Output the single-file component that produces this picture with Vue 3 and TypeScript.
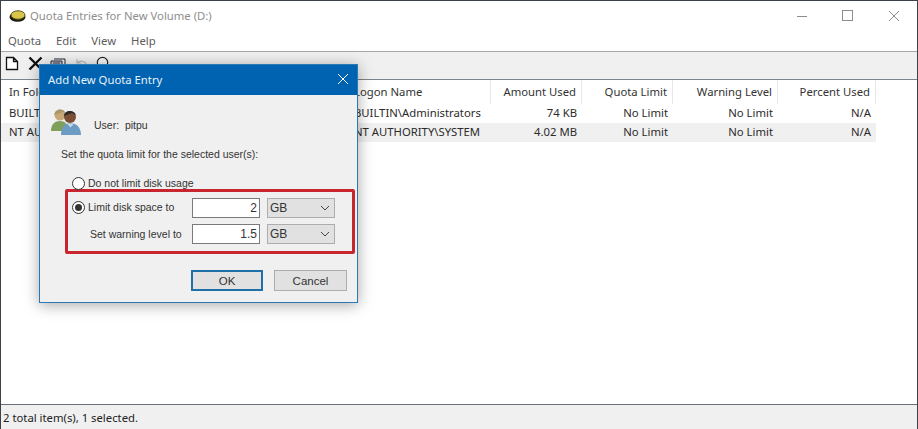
<script setup lang="ts">
interface QuotaRow {
  folder: string;
  logon: string;
  used: string;
  limit: string;
  warning: string;
  percent: string;
  selected?: boolean;
}

const menus = ['Quota', 'Edit', 'View', 'Help'];

const rows: QuotaRow[] = [
  { folder: 'BUILTIN', logon: 'BUILTIN\\Administrators', used: '74 KB', limit: 'No Limit', warning: 'No Limit', percent: 'N/A' },
  { folder: 'NT AUTHORITY', logon: 'NT AUTHORITY\\SYSTEM', used: '4.02 MB', limit: 'No Limit', warning: 'No Limit', percent: 'N/A', selected: true }
];
</script>

<template>
  <div class="window">
    <div class="titlebar">
      <svg class="app-icon" width="18" height="14" viewBox="0 0 18 14">
        <ellipse cx="8.500" cy="8" rx="8" ry="4.800" fill="#1c1a0c" />
        <ellipse cx="9" cy="6" rx="7" ry="4.200" fill="#d8c64a" stroke="#5f5a20" stroke-width="1" />
      </svg>
      <span class="title-text">Quota Entries for New Volume (D:)</span>
      <div class="caption-buttons">
        <svg width="12" height="12" viewBox="0 0 12 12"><path d="M1 6.500h10" stroke="#8c8c8c" fill="none" /></svg>
        <svg width="12" height="12" viewBox="0 0 12 12"><rect x="0.500" y="0.500" width="10" height="10" stroke="#8c8c8c" fill="none" /></svg>
        <svg width="12" height="12" viewBox="0 0 12 12"><path d="M1 1l10 10M11 1L1 11" stroke="#8c8c8c" fill="none" /></svg>
      </div>
    </div>

    <div class="menubar">
      <span v-for="menu in menus" :key="menu">{{ menu }}</span>
    </div>

    <div class="toolbar">
      <svg width="16" height="15" viewBox="0 0 16 15"><path d="M1.500 1.500h7l4 4v8h-11zM8.500 1.500v4h4" fill="#fff" stroke="#111" stroke-width="1.300" /></svg>
      <svg width="15" height="15" viewBox="0 0 15 15"><path d="M1.500 1.500l12 12M13.500 1.500l-12 12" stroke="#111" stroke-width="2.400" fill="none" /></svg>
      <svg width="17" height="15" viewBox="0 0 17 15"><path d="M1 5h11v9H1z" fill="#c9ccd6" stroke="#223" /><path d="M4 3h11v8" fill="none" stroke="#223" /><path d="M3 7h7M3 9h7M3 11h7" stroke="#334" /></svg>
      <svg width="15" height="15" viewBox="0 0 15 15"><path d="M3 7a5 4 0 0 1 9 1M3 3v4h4" fill="none" stroke="#b9b9b9" stroke-width="1.200" /></svg>
      <svg width="14" height="15" viewBox="0 0 14 15"><circle cx="6.500" cy="6.500" r="5.200" fill="#f5f7f7" stroke="#222" stroke-width="1.200" /></svg>
    </div>

    <div class="list">
      <div class="list-row list-head">
        <div class="cell">In Folder</div>
        <div class="cell"></div>
        <div class="cell logon">Logon Name</div>
        <div class="cell num">Amount Used</div>
        <div class="cell num">Quota Limit</div>
        <div class="cell num">Warning Level</div>
        <div class="cell num">Percent Used</div>
      </div>
      <div v-for="row in rows" :key="row.logon" class="list-row" :class="{ selected: row.selected }">
        <div class="cell">{{ row.folder }}</div>
        <div class="cell"></div>
        <div class="cell logon">{{ row.logon }}</div>
        <div class="cell num">{{ row.used }}</div>
        <div class="cell num">{{ row.limit }}</div>
        <div class="cell num">{{ row.warning }}</div>
        <div class="cell num">{{ row.percent }}</div>
      </div>
    </div>

    <div class="statusbar">2 total item(s), 1 selected.</div>

    <div class="dialog">
      <div class="dialog-title">
        <span>Add New Quota Entry</span>
        <svg width="12" height="12" viewBox="0 0 12 12"><path d="M1 1l10 10M11 1L1 11" stroke="#fff" stroke-width="1" fill="none" /></svg>
      </div>
      <div class="dialog-body">
        <div class="user-line">
          <svg width="32" height="30" viewBox="0 2 32 30">
            <circle cx="10" cy="9" r="5.500" fill="#c9a878" />
            <path d="M4.500 9c-.5-6 9-8 11-2l-3-1.500-2 1.500z" fill="#a8986a" />
            <path d="M1 25c0-7 4-10 9-10s8 3 8 10z" fill="#7ea05a" />
            <circle cx="20" cy="11" r="6" fill="#7a4f36" />
            <path d="M14 10c0-6 10-7 12-1l-4-2z" fill="#2f2a28" />
            <path d="M11 29c0-8 4-12 9.500-12S31 21 31 29z" fill="#6c9cc4" />
            <path d="M17 17.500l3.500 4 3.500-4z" fill="#c5d9e8" />
          </svg>
          <span class="user-text">User:&nbsp;&nbsp;pitpu</span>
        </div>
        <p class="prompt">Set the quota limit for the selected user(s):</p>
        <label class="radio-line">
          <span class="radio"></span>
          <span>Do not limit disk usage</span>
        </label>
        <div class="limits">
          <div class="limit-row">
            <label class="radio-line tight">
              <span class="radio on"></span>
              <span>Limit disk space to</span>
            </label>
            <div class="field">2</div>
            <div class="combo">
              <span>GB</span>
              <svg width="10" height="6" viewBox="0 0 10 6"><path d="M1 1l4 4 4-4" fill="none" stroke="#444" /></svg>
            </div>
          </div>
          <div class="limit-row">
            <span class="warn-label">Set warning level to</span>
            <div class="field">1.5</div>
            <div class="combo">
              <span>GB</span>
              <svg width="10" height="6" viewBox="0 0 10 6"><path d="M1 1l4 4 4-4" fill="none" stroke="#444" /></svg>
            </div>
          </div>
        </div>
        <div class="actions">
          <button class="btn default" type="button">OK</button>
          <button class="btn" type="button">Cancel</button>
        </div>
      </div>
    </div>
  </div>
</template>

<style scoped>
.window {
  position: relative;
  width: 918px;
  height: 429px;
  box-sizing: border-box;
  display: flex;
  flex-direction: column;
  overflow: hidden;
  background: #fff;
  border: 1px solid #3a4149;
  border-bottom: none;
  font-family: "Noto Sans", "Open Sans", sans-serif;
  font-size: 11.3px;
  color: #2b2b2b;
}

.titlebar {
  height: 31px;
  box-sizing: border-box;
  padding: 0 0 2px 8px;
  display: flex;
  align-items: center;
  flex: none;
}

.title-text {
  margin-left: 3px;
  color: #8e8e8e;
}

.caption-buttons {
  margin-left: auto;
  display: flex;
  gap: 34px;
  padding-right: 17px;
}

.menubar {
  height: 20px;
  flex: none;
  box-sizing: border-box;
  padding: 0 0 2px 7px;
  display: flex;
  align-items: center;
  gap: 15px;
  color: #5c5c5c;
  border-bottom: 1px solid #a6a6a6;
}

.toolbar {
  height: 28px;
  flex: none;
  display: flex;
  align-items: flex-start;
  gap: 7px;
  padding: 4px 0 0 4px;
  box-sizing: border-box;
  background: #f0f0f0;
  border-bottom: 1px solid #7d858c;
}

.list {
  flex: 1;
}

.list-row {
  display: grid;
  grid-template-columns: 150px 198px 142px 91px 91px 105px 98px;
  height: 19px;
  line-height: 18px;
  align-items: start;
  width: 875px;
}

.list-head {
  height: 24px;
  color: #333;
}

.list-head .cell {
  height: 24px;
  line-height: 23px;
  border-right: 1px solid #e6e6e6;
}

.cell {
  padding: 0 5px 0 8px;
  white-space: nowrap;
  overflow: hidden;
  box-sizing: border-box;
}

.logon {
  padding-left: 5px;
}

.num {
  text-align: right;
}

.selected {
  background: #f0f0f0;
}

.statusbar {
  height: 25px;
  flex: none;
  box-sizing: border-box;
  padding-left: 2px;
  line-height: 25px;
  background: #f0f0f0;
  border-top: 1px solid #6a7078;
  color: #222;
}

.dialog {
  position: absolute;
  left: 38px;
  top: 63px;
  width: 319px;
  height: 239px;
  box-sizing: border-box;
  background: #f0f0f0;
  border: 1px solid #2a78b4;
  box-shadow: 0 2px 14px rgba(0, 0, 0, 0.35);
  display: flex;
  flex-direction: column;
}

.dialog-title {
  height: 30px;
  flex: none;
  display: flex;
  align-items: center;
  justify-content: space-between;
  box-sizing: border-box;
  padding: 0 8px 2px 8px;
  background: #0063b1;
  color: #e8f2fa;
}

.dialog-body {
  flex: 1;
  display: flex;
  flex-direction: column;
  color: #333;
  font-family: "Liberation Sans", Arial, sans-serif;
  font-size: 10.5px;
  padding: 12px 0 0 0;
}

.user-line {
  display: flex;
  align-items: center;
  gap: 12px;
  padding-left: 10px;
  height: 32px;
  flex: none;
}

.user-text {
  margin-top: 4px;
}

.prompt {
  margin: 7px 0 0 21px;
  line-height: 17px;
}

.radio-line {
  display: flex;
  align-items: center;
  gap: 3px;
  margin: 12px 0 0 32px;
  height: 16px;
  flex: none;
}

.radio-line.tight {
  margin: -2px 0 0 4px;
  width: 120px;
}

.radio {
  width: 13px;
  height: 13px;
  box-sizing: border-box;
  border: 1px solid #333;
  border-radius: 50%;
  background: #fff;
  flex: none;
  position: relative;
}

.radio.on::after {
  content: "";
  position: absolute;
  inset: 2px;
  border-radius: 50%;
  background: #333;
}

.limits {
  margin: -2px 0 0 25px;
  width: 290px;
  height: 65px;
  flex: none;
  box-sizing: border-box;
  border: 3px solid #c9252f;
  border-radius: 2px;
  display: flex;
  flex-direction: column;
  gap: 6px;
  padding-top: 6px;
}

.limit-row {
  display: flex;
  align-items: center;
  height: 20px;
}

.warn-label {
  width: 124px;
  padding-left: 22px;
  box-sizing: border-box;
  white-space: nowrap;
}

.field {
  width: 68px;
  height: 20px;
  box-sizing: border-box;
  background: #fff;
  border: 1px solid #7a7a7a;
  text-align: right;
  padding-right: 2px;
  line-height: 18px;
  font-size: 12px;
  margin-left: auto;
}

.combo {
  width: 68px;
  height: 20px;
  box-sizing: border-box;
  margin: 0 17px 0 7px;
  display: flex;
  align-items: center;
  justify-content: space-between;
  padding: 0 4px 0 2px;
  background: #e1e1e1;
  border: 1px solid #adadad;
  font-size: 12px;
}

.actions {
  display: flex;
  justify-content: flex-end;
  gap: 11px;
  padding: 16px 10px 0 0;
}

.btn {
  width: 73px;
  height: 21px;
  padding: 0;
  box-sizing: border-box;
  background: #e1e1e1;
  border: 1px solid #adadad;
  font: inherit;
  font-size: 11.500px;
  color: #333;
}

.btn.default {
  width: 72px;
  border: 2px solid #1f6fa8;
}
</style>
